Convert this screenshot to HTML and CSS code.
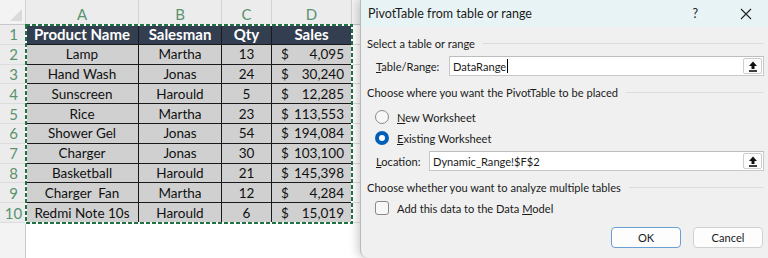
FILE: index.html
```html
<!DOCTYPE html>
<html>
<head>
<meta charset="utf-8">
<link rel="stylesheet" href="styles.css">
</head>
<body>
<div class="screen">
  <div class="sheet">
    <div class="ch corner"><span class="tri"></span></div>
    <div class="ch">A</div>
    <div class="ch">B</div>
    <div class="ch">C</div>
    <div class="ch">D</div>
    <div class="ch e"></div>

    <div class="rh">1</div>
    <div class="hd">Product Name</div>
    <div class="hd">Salesman</div>
    <div class="hd">Qty</div>
    <div class="hd">Sales</div>
    <div class="ec"></div>

    <div class="rh">2</div><div class="c">Lamp</div><div class="c">Martha</div><div class="c">13</div><div class="c money"><span>$</span><span>4,095</span></div><div class="ec"></div>
    <div class="rh">3</div><div class="c">Hand Wash</div><div class="c">Jonas</div><div class="c">24</div><div class="c money"><span>$</span><span>30,240</span></div><div class="ec"></div>
    <div class="rh">4</div><div class="c">Sunscreen</div><div class="c">Harould</div><div class="c">5</div><div class="c money"><span>$</span><span>12,285</span></div><div class="ec"></div>
    <div class="rh">5</div><div class="c">Rice</div><div class="c">Martha</div><div class="c">23</div><div class="c money"><span>$</span><span>113,553</span></div><div class="ec"></div>
    <div class="rh">6</div><div class="c">Shower Gel</div><div class="c">Jonas</div><div class="c">54</div><div class="c money"><span>$</span><span>194,084</span></div><div class="ec"></div>
    <div class="rh">7</div><div class="c">Charger</div><div class="c">Jonas</div><div class="c">30</div><div class="c money"><span>$</span><span>103,100</span></div><div class="ec"></div>
    <div class="rh">8</div><div class="c">Basketball</div><div class="c">Harould</div><div class="c">21</div><div class="c money"><span>$</span><span>145,398</span></div><div class="ec"></div>
    <div class="rh">9</div><div class="c">Charger&nbsp; Fan</div><div class="c">Martha</div><div class="c">12</div><div class="c money"><span>$</span><span>4,284</span></div><div class="ec"></div>
    <div class="rh">10</div><div class="c">Redmi Note 10s</div><div class="c">Harould</div><div class="c">6</div><div class="c money"><span>$</span><span>15,019</span></div><div class="ec"></div>

    <div class="rh blank"></div><div class="fill"></div><div class="fill"></div><div class="fill"></div><div class="fill"></div><div class="fill"></div>

    <svg class="ants" width="328" height="200" viewBox="0 0 328 200">
      <rect x="1" y="1" width="326" height="198" fill="none" stroke="#ffffff" stroke-width="2"/>
      <rect x="1" y="1" width="326" height="198" fill="none" stroke="#217346" stroke-width="2" stroke-dasharray="4 2"/>
    </svg>
  </div>

  <div class="dialog">
    <div class="titlebar">
      <span class="title">PivotTable from table or range</span>
      <span class="help">?</span>
      <svg class="close" width="12" height="12" viewBox="0 0 12 12"><path d="M1 1 L11 11 M11 1 L1 11" stroke="#222" stroke-width="1.1"/></svg>
    </div>
    <div class="body">
      <div class="section s1"><span>Select a table or range</span><span class="rule"></span></div>
      <div class="field f1">
        <span class="label lbl1"><u>T</u>able/Range:</span>
        <div class="input"><span class="val">DataRange<span class="caret"></span></span>
          <span class="upbtn"><svg width="10" height="11" viewBox="0 0 10 11"><path d="M5 0.5 L9 5 L6.5 5 L6.5 8 L3.5 8 L3.5 5 L1 5 Z" fill="#111"/><rect x="1" y="9.2" width="8" height="1.6" fill="#111"/></svg></span>
        </div>
      </div>
      <div class="section s2"><span>Choose where you want the PivotTable to be placed</span><span class="rule"></span></div>
      <div class="opt o1"><span class="radio"></span><span><u>N</u>ew Worksheet</span></div>
      <div class="opt o2"><span class="radio on"></span><span><u>E</u>xisting Worksheet</span></div>
      <div class="field f2">
        <span class="label lbl2"><u>L</u>ocation:</span>
        <div class="input"><span class="val">Dynamic_Range!$F$2</span>
          <span class="upbtn"><svg width="10" height="11" viewBox="0 0 10 11"><path d="M5 0.5 L9 5 L6.5 5 L6.5 8 L3.5 8 L3.5 5 L1 5 Z" fill="#111"/><rect x="1" y="9.2" width="8" height="1.6" fill="#111"/></svg></span>
        </div>
      </div>
      <div class="section s3"><span>Choose whether you want to analyze multiple tables</span><span class="rule"></span></div>
      <div class="opt o3"><span class="check"></span><span>Add this data to the Data <u>M</u>odel</span></div>
      <div class="buttons">
        <span class="btn ok">OK</span>
        <span class="btn">Cancel</span>
      </div>
    </div>
  </div>
</div>
</body>
</html>
```
FILE: styles.css
```css
* { box-sizing: border-box; }
html, body { margin: 0; padding: 0; }
body { width: 768px; height: 258px; overflow: hidden; background: #fff; }
.screen { display: flex; width: 768px; height: 258px; }

.sheet {
  position: relative;
  flex: 0 0 360px;
  height: 258px;
  display: grid;
  grid-template-columns: 26px 113px 83px 50px 80px 8px;
  grid-template-rows: 25px repeat(10, 19.8px) 1fr;
  font-family: Lato, "Liberation Sans", sans-serif;
  font-size: 13.5px;
  color: #111;
  background: #fff;
}
.ch {
  background: #ececec;
  border-right: 1px solid #d2d2d2;
  border-bottom: 1px solid #c8c8c8;
  color: #5a9270;
  font-size: 15px;
  display: flex; align-items: center; justify-content: center;
  padding-top: 3px;
}
.ch.e { border-right: none; background: #f3f3f3; }
.corner { position: relative; background: #f3f3f3; }
.tri {
  position: absolute; right: 3px; bottom: 3px;
  width: 0; height: 0;
  border-left: 12px solid transparent;
  border-bottom: 12px solid #dadada;
}
.rh {
  background: #ececec;
  border-right: 1px solid #c8c8c8;
  border-bottom: 1px solid #dcdcdc;
  color: #5a9270;
  font-size: 15px;
  display: flex; align-items: center; justify-content: center;
  padding-left: 2px;
}
.rh.blank { background: #f3f3f3; border-bottom: none; }
.hd {
  background: #333f50;
  color: #fff;
  font-weight: 700;
  font-size: 15px;
  display: flex; align-items: center; justify-content: center;
  border-right: 1px solid #1a1a1a;
  border-bottom: 1px solid #1a1a1a;
}
.c {
  background: #d0d0d0;
  display: flex; align-items: center; justify-content: center;
  border-right: 1px solid #1a1a1a;
  border-bottom: 1px solid #1a1a1a;
  white-space: nowrap;
}
.money { justify-content: space-between; padding: 0 7px 0 9px; }
.ec { background: #fff; border-bottom: 1px solid #e2e2e2; }
.fill { background: #fff; }
.ants { position: absolute; left: 25px; top: 24px; }

.dialog {
  flex: 0 0 408px;
  height: 258px;
  background: #f0f0f0;
  border-left: 1px solid #b9b9b9;
  border-bottom-left-radius: 8px;
  box-shadow: -3px 0 8px rgba(0,0,0,0.18);
  font-family: Lato, "Noto Sans", sans-serif;
  font-size: 11.1px;
  color: #1b1b1b;
  position: relative;
  z-index: 2;
}
.titlebar {
  height: 27px;
  background: #e8f3f5;
  display: flex; align-items: center;
  padding-left: 7px;
}
.title { font-size: 12.5px; flex: 1; }
.help { font-size: 12.5px; margin-right: 42px; color: #222; }
.close { margin-right: 16px; }
.body { padding-left: 6px; padding-right: 4px; display: flex; flex-direction: column; }
.section { height: 20px; display: flex; align-items: center; }
.section .rule { flex: 1; height: 1px; background: #dcdcdc; margin-left: 8px; }
.s1 { margin-top: 6px; }
.s2 { margin-top: 6px; }
.s3 { margin-top: 6px; }
.field { height: 20px; display: flex; align-items: center; margin-top: 3px; }
.label { padding-left: 9px; }
.lbl1 { width: 82px; }
.lbl2 { width: 62px; }
.input {
  flex: 1; height: 20px;
  background: #fff;
  border: 1px solid #c8c8c8;
  border-top-color: #bdbdbd;
  display: flex; align-items: center;
}
.val { flex: 1; padding-left: 3px; display: flex; align-items: center; }
.caret { display: inline-block; width: 1px; height: 14px; background: #000; margin-left: 1px; }
.upbtn {
  width: 19px; height: 16px;
  margin-right: 1px;
  border: 1px solid #cdcdcd;
  border-radius: 2px;
  background: #fdfdfd;
  display: flex; align-items: center; justify-content: center;
}
.opt { height: 20px; display: flex; align-items: center; padding-left: 8px; }
.o1 { margin-top: 5px; }
.o2 { margin-top: 1px; }
.o3 { margin-top: 1px; }
.radio {
  width: 14px; height: 14px; border-radius: 50%;
  border: 1px solid #8a8a8a; background: #f7f7f7;
  margin-right: 8px;
}
.radio.on { border: 4px solid #005fb8; background: #fff; }
.check {
  width: 14px; height: 14px; border-radius: 3px;
  border: 1px solid #8a8a8a; background: #f7f7f7;
  margin-left: 0px; margin-right: 8px;
}
.buttons { display: flex; justify-content: flex-end; gap: 12px; margin-top: 9px; padding-right: 1px; }
.btn {
  width: 70px; height: 21px;
  background: #fdfdfd;
  border: 1px solid #d0d0d0;
  border-radius: 4px;
  display: flex; align-items: center; justify-content: center;
}
.btn.ok { border: 1.5px solid #6a9fd4; }
```
